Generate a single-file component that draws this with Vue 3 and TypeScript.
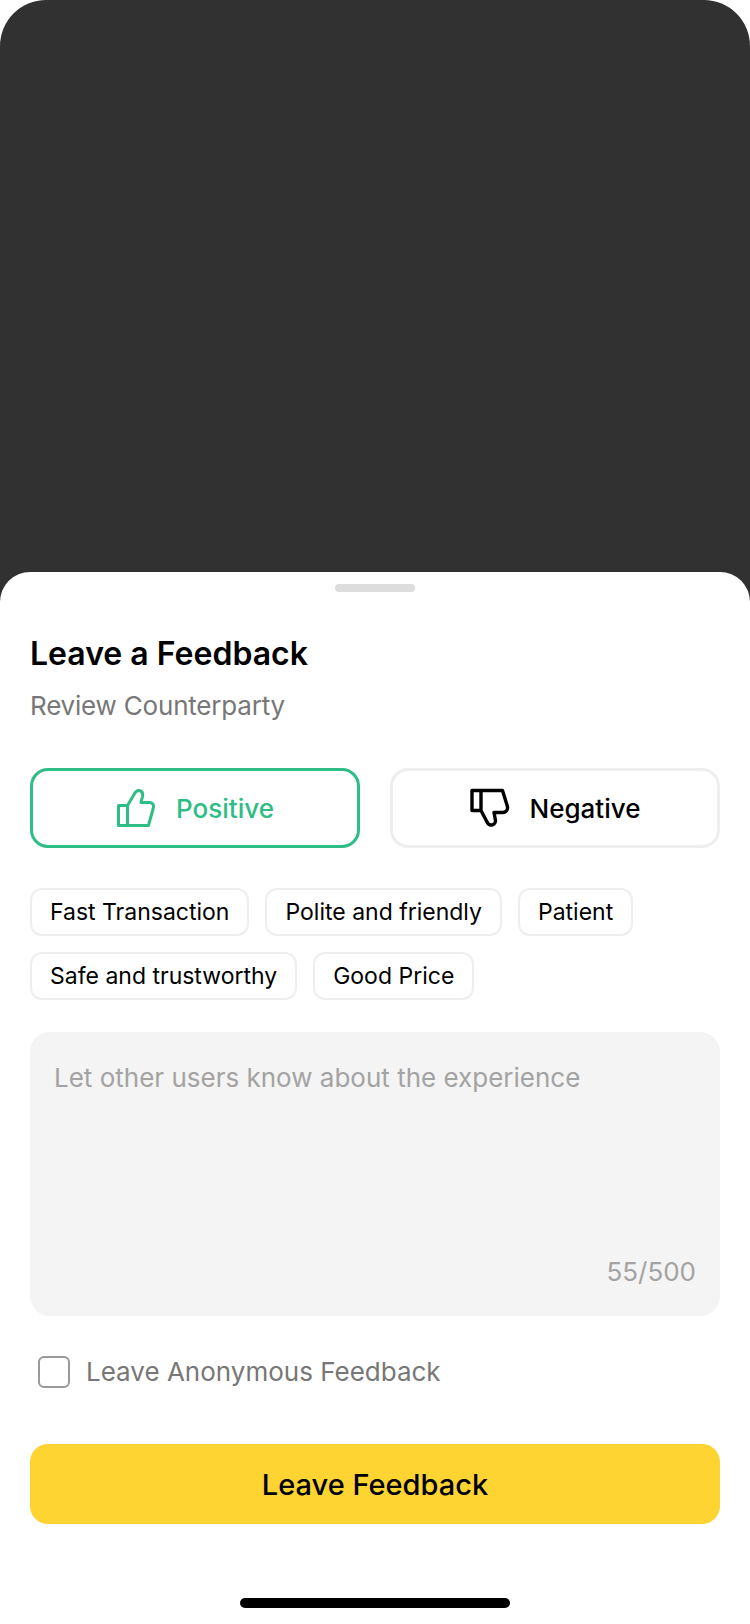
<script setup lang="ts">
const tagRows: string[] = ['Fast Transaction', 'Polite and friendly', 'Patient', 'Safe and trustworthy', 'Good Price']
</script>

<template>
  <div class="screen">
    <div class="sheet">
      <div class="handle"></div>
      <h1 class="title">Leave a Feedback</h1>
      <p class="subtitle">Review Counterparty</p>

      <div class="choice">
        <button class="choice-btn positive">
          <svg width="40" height="40" viewBox="0 0 40 40" fill="none" stroke="currentColor" stroke-width="3" stroke-linejoin="round" stroke-linecap="round">
            <path d="M11.5 17.5 L18 6.5 C19.5 3.5 21.5 2 24 2.7 C26.5 3.5 27 6 26.5 8.5 L25 14.5 H33.5 C36.5 14.5 38.2 17 37.3 20 L32.5 37.5 H2.5 V17.5 H11.5 V37.5" />
          </svg>
          <span>Positive</span>
        </button>
        <button class="choice-btn">
          <svg width="40" height="40" viewBox="0 0 40 40" fill="none" stroke="currentColor" stroke-width="3.4" stroke-linejoin="round" stroke-linecap="round">
            <path d="M11 22.5 L16.5 33 C18 36.5 20.5 37.5 22.5 36.8 C25 36 25.8 33.5 25.3 31.5 L24 24.5 H32.5 C36.5 24.5 38.2 21 37.3 18 L32.5 2.5 H2 V22.5 H11 V2.5" />
          </svg>
          <span>Negative</span>
        </button>
      </div>

      <div class="tags">
        <span v-for="tag in tagRows" :key="tag" class="tag">{{ tag }}</span>
      </div>

      <div class="field">
        <span class="placeholder">Let other users know about the experience</span>
        <span class="count">55/500</span>
      </div>

      <label class="anon">
        <span class="box"></span>
        <span>Leave Anonymous Feedback</span>
      </label>

      <button class="submit">Leave Feedback</button>
      <div class="home-bar"></div>
    </div>
  </div>
</template>

<style>
html,
body {
  background: #fff;
}
</style>

<style scoped>
.screen {
  width: 750px;
  height: 1624px;
  padding-top: 572px;
  box-sizing: border-box;
  background: #313131;
  border-radius: 46px 46px 0 0;
  font-family: Inter, "Open Sans", sans-serif;
}

.sheet {
  height: 1052px;
  box-sizing: border-box;
  padding: 12px 30px 0;
  background: #fff;
  border-radius: 30px 30px 0 0;
  display: flex;
  flex-direction: column;
}

.handle {
  width: 80px;
  height: 8px;
  margin: 0 auto;
  border-radius: 4px;
  background: #ddd;
}

.title {
  margin: 40px 0 0;
  font-size: 32px;
  line-height: 44px;
  font-weight: 600;
  color: #000;
}

.subtitle {
  margin: 12px 0 0;
  font-size: 26px;
  line-height: 36px;
  letter-spacing: -0.2px;
  color: #777;
}

.choice {
  margin-top: 44px;
  display: flex;
  gap: 30px;
}

.choice-btn {
  flex: 1;
  height: 80px;
  box-sizing: border-box;
  border: 3px solid #eee;
  border-radius: 18px;
  background: #fff;
  color: #000;
  font: 500 26px Inter, sans-serif;
  display: flex;
  align-items: center;
  justify-content: center;
  gap: 20px;
  padding: 0;
}

.positive {
  border-color: #2ebd85;
  color: #2ebd85;
}

.tags {
  margin-top: 40px;
  display: flex;
  flex-wrap: wrap;
  gap: 16px;
}

.tag {
  height: 48px;
  box-sizing: border-box;
  padding: 0 18px;
  border: 2px solid #eee;
  border-radius: 12px;
  font-size: 23px;
  line-height: 44px;
  color: #000;
}

.field {
  margin-top: 32px;
  height: 284px;
  box-sizing: border-box;
  padding: 28px 24px 26px;
  border-radius: 20px;
  background: #f4f4f4;
  display: flex;
  flex-direction: column;
  justify-content: space-between;
  font-size: 26px;
  line-height: 36px;
  color: #a3a3a3;
}

.count {
  align-self: flex-end;
}

.anon {
  margin: 40px 0 0 8px;
  display: flex;
  align-items: center;
  gap: 16px;
  font-size: 26px;
  line-height: 32px;
  color: #777;
}

.box {
  width: 32px;
  height: 32px;
  box-sizing: border-box;
  border: 2px solid #999;
  border-radius: 6px;
}

.submit {
  margin-top: 56px;
  height: 80px;
  border: 0;
  border-radius: 18px;
  background: #fdd432;
  color: #000;
  font: 500 29px Inter, sans-serif;
}

.home-bar {
  width: 270px;
  height: 10px;
  margin: 74px auto 0;
  border-radius: 5px;
  background: #000;
}
</style>
